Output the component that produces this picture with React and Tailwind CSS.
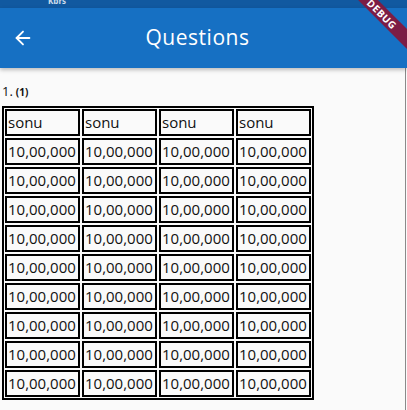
import React from 'react';
import { ArrowLeft } from 'lucide-react';

const ROWS = 9;

const Cell = ({ children }) => (
  <div className="w-[75px] h-[27px] border-2 border-black flex items-center pl-[1px] text-[15px] leading-none text-[#111] whitespace-nowrap overflow-hidden">
    {children}
  </div>
);

const App = () => {
  return (
    <div className="relative w-[407px] h-[410px] overflow-hidden bg-[#fafafa]" style={{ fontFamily: '"Open Sans", Lato, sans-serif' }}>
      {/* Status bar */}
      <div className="h-[8px] bg-[#1159a0] relative">
        <span className="absolute left-[48px] -top-[5px] text-[8px] font-bold text-white/80">Kbrs</span>
      </div>

      {/* App bar */}
      <header className="h-[60px] bg-[#1670c3] flex items-center px-[12px] shadow-[0_2px_4px_rgba(0,0,0,0.25)] relative z-10">
        <ArrowLeft size={22} strokeWidth={2} className="text-white" />
        <h1 className="flex-1 text-center text-white text-[21px] font-medium tracking-wide pr-[34px]">Questions</h1>
      </header>

      {/* Debug banner */}
      <div className="absolute top-[7px] right-[-30px] w-[110px] h-[14px] bg-[#7c1d45] rotate-45 flex items-center justify-center z-20">
        <span className="text-white text-[10px] font-bold tracking-wider leading-none">DEBUG</span>
      </div>

      {/* Body */}
      <main className="border-r border-[#8a8a8a] h-[342px] w-[406px] pt-[17px] pl-[2px]">
        <div className="flex items-baseline gap-[3px] text-[13px] text-[#111] leading-none mb-[8px]">
          <span>1.</span>
          <span className="text-[10px] font-bold">(1)</span>
        </div>
        <div className="inline-flex flex-col gap-[2px] border-2 border-black p-[1px]">
          <div className="flex gap-[2px]">
            {['sonu', 'sonu', 'sonu', 'sonu'].map((t, i) => <Cell key={i}>{t}</Cell>)}
          </div>
          {Array.from({ length: ROWS }).map((_, r) => (
            <div key={r} className="flex gap-[2px]">
              {[0, 1, 2, 3].map(c => <Cell key={c}>10,00,000</Cell>)}
            </div>
          ))}
        </div>
      </main>
    </div>
  );
};

export default App;
